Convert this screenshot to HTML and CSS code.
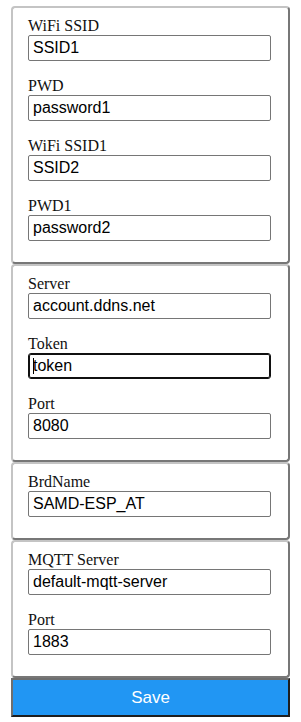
FILE: index.html
```html
<!DOCTYPE html>
<html>
<head>
<meta charset="utf-8">
<link rel="stylesheet" href="styles.css">
</head>
<body>
<form class="form">
  <div class="group">
    <div class="field"><label class="label">WiFi SSID</label><input class="input" value="SSID1"></div>
    <div class="field"><label class="label">PWD</label><input class="input" value="password1"></div>
    <div class="field"><label class="label">WiFi SSID1</label><input class="input" value="SSID2"></div>
    <div class="field"><label class="label">PWD1</label><input class="input" value="password2"></div>
  </div>
  <div class="group">
    <div class="field"><label class="label">Server</label><input class="input" value="account.ddns.net"></div>
    <div class="field"><label class="label">Token</label><div class="caret-wrap"><input class="input input-focus" value="token"></div></div>
    <div class="field"><label class="label">Port</label><input class="input" value="8080"></div>
  </div>
  <div class="group">
    <div class="field"><label class="label">BrdName</label><input class="input" value="SAMD-ESP_AT"></div>
  </div>
  <div class="group">
    <div class="field"><label class="label">MQTT Server</label><input class="input" value="default-mqtt-server"></div>
    <div class="field"><label class="label">Port</label><input class="input" value="1883"></div>
  </div>
  <button type="button" class="save">Save</button>
</form>
</body>
</html>
```
FILE: styles.css
```css
html, body {
  background: #ffffff;
}
body {
  margin: 0;
  padding: 6px 11px 0;
  font-family: "Liberation Serif", "Times New Roman", serif;
  color: #111111;
}
.form {
  display: flex;
  flex-direction: column;
}
.group {
  border: 2px solid;
  border-color: #c4c4c4 #777777 #777777 #c4c4c4;
  border-radius: 4px;
  padding: 9px 17px 5px 15px;
}
.field {
  display: flex;
  flex-direction: column;
  margin-bottom: 16px;
}
.label {
  display: block;
  font-size: 16px;
  line-height: 18px;
  height: 18px;
}
.input {
  display: block;
  box-sizing: border-box;
  width: 100%;
  height: 26px;
  margin: 0;
  padding: 0 4px;
  border: 1px solid #767676;
  border-radius: 2px;
  font-family: "Liberation Sans", Arial, sans-serif;
  font-size: 16px;
  color: #000000;
  background: #ffffff;
  outline: none;
}
.input-focus {
  border-color: #101010;
  box-shadow: inset 0 0 0 1px #101010;
  border-radius: 3px;
}
.caret-wrap {
  position: relative;
}
.caret-wrap::after {
  content: "";
  position: absolute;
  left: 5px;
  top: 5px;
  width: 1px;
  height: 16px;
  background: #000000;
}
.save {
  display: block;
  box-sizing: border-box;
  width: 100%;
  height: 39px;
  margin: 0;
  padding: 0;
  border: 2px solid;
  border-color: #6e6e6e #1e1e1e #1e1e1e #6e6e6e;
  background: #2196f3;
  color: #ffffff;
  font-family: "Liberation Sans", Arial, sans-serif;
  font-size: 17px;
  cursor: pointer;
}
```
